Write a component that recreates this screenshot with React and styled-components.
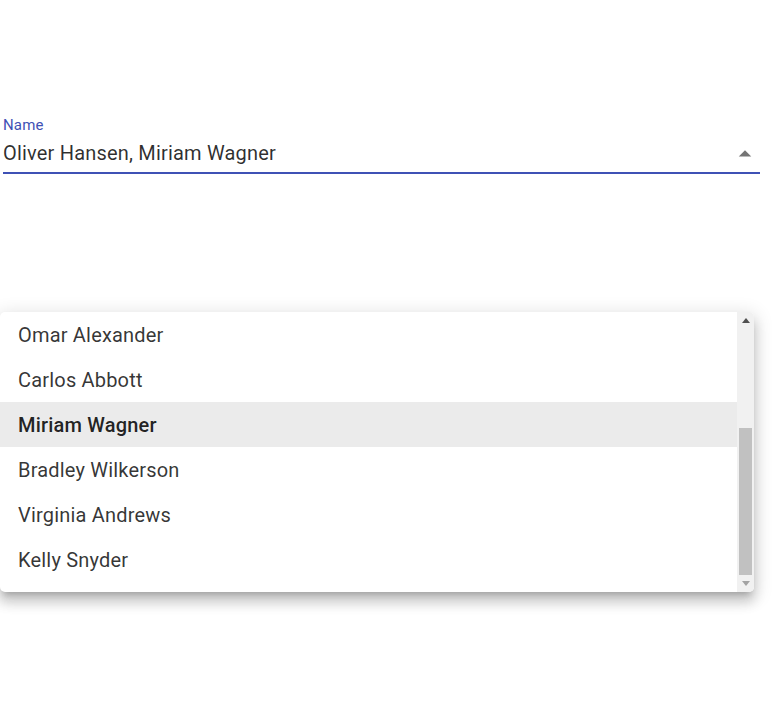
import React from 'react';
import styled, { createGlobalStyle } from 'styled-components';

const GlobalStyle = createGlobalStyle`
  html, body {
    margin: 0;
    padding: 0;
    background: #fff;
  }
  body {
    font-family: Roboto, "Noto Sans", Arial, sans-serif;
    color: rgba(0, 0, 0, 0.87);
  }
`;

const Page = styled.div`
  position: relative;
  height: 708px;
  padding: 114px 0 0 3px;
  box-sizing: border-box;
`;

const Field = styled.div`
  width: 757px;
`;

const Label = styled.label`
  display: block;
  box-sizing: border-box;
  height: 20px;
  padding-top: 4px;
  font-size: 15px;
  line-height: 1;
  letter-spacing: 0.01em;
  color: #3f51b5;
`;

const InputBase = styled.div`
  display: flex;
  align-items: flex-start;
  box-sizing: border-box;
  height: 40px;
  padding-top: 7.5px;
  border-bottom: 2px solid #3f51b5;
`;

const Value = styled.span`
  flex: 1;
  font-size: 20px;
  line-height: 23.75px;
  letter-spacing: 0.0094em;
  white-space: nowrap;
  color: rgba(0, 0, 0, 0.82);
`;

const Arrow = styled.svg`
  width: 30px;
  height: 30px;
  margin-top: -2.5px;
  fill: rgba(0, 0, 0, 0.54);
  transform: rotate(180deg);
`;

const Menu = styled.div`
  position: absolute;
  top: 312px;
  left: 0;
  width: 754px;
  height: 280px;
  display: flex;
  background: #fff;
  border-radius: 5px;
  overflow: hidden;
  box-shadow: 0 6px 6px -4px rgba(0, 0, 0, 0.2), 0 10px 12px 1px rgba(0, 0, 0, 0.14),
    0 4px 18px 3px rgba(0, 0, 0, 0.12);
`;

const Viewport = styled.div`
  flex: 1;
  overflow: hidden;
`;

const List = styled.ul`
  list-style: none;
  margin: ${(p) => -p.$offset}px 0 0;
  padding: 10px 0;
`;

const Item = styled.li`
  display: flex;
  align-items: center;
  height: 45px;
  padding: 0 18px;
  font-size: 20px;
  letter-spacing: 0.0094em;
  color: ${(p) => (p.$selected ? 'rgba(0, 0, 0, 0.87)' : 'rgba(0, 0, 0, 0.8)')};
  font-weight: ${(p) => (p.$selected ? 500 : 400)};
  background: ${(p) => (p.$selected ? 'rgba(0, 0, 0, 0.08)' : 'transparent')};
`;

const Scrollbar = styled.div`
  display: flex;
  flex-direction: column;
  width: 17px;
  background: #f1f1f1;
`;

const ScrollButton = styled.div`
  display: flex;
  align-items: center;
  justify-content: center;
  height: 17px;
  svg {
    fill: ${(p) => (p.$disabled ? '#a3a3a3' : '#505050')};
  }
`;

const Track = styled.div`
  flex: 1;
  display: flex;
  flex-direction: column;
  justify-content: flex-end;
  padding: 0 2px;
`;

const Thumb = styled.div`
  background: #c1c1c1;
`;

const names = [
  'Oliver Hansen',
  'Van Henry',
  'April Tucker',
  'Ralph Hubbard',
  'Omar Alexander',
  'Carlos Abbott',
  'Miriam Wagner',
  'Bradley Wilkerson',
  'Virginia Andrews',
  'Kelly Snyder',
];

const selected = ['Oliver Hansen', 'Miriam Wagner'];

const MENU_HEIGHT = 280;
const ITEM_HEIGHT = 45;
const LIST_PADDING = 10;
const BUTTON = 17;

export default function App() {
  const listHeight = names.length * ITEM_HEIGHT + LIST_PADDING * 2;
  const offset = listHeight - MENU_HEIGHT;
  const trackHeight = MENU_HEIGHT - BUTTON * 2;
  const thumbHeight = (trackHeight * MENU_HEIGHT) / listHeight;

  return (
    <>
      <GlobalStyle />
      <Page>
        <Field>
          <Label>Name</Label>
          <InputBase>
            <Value>{selected.join(', ')}</Value>
            <Arrow viewBox="0 0 24 24">
              <path d="M7 10l5 5 5-5z" />
            </Arrow>
          </InputBase>
        </Field>

        <Menu>
          <Viewport>
            <List $offset={offset}>
              {names.map((name) => (
                <Item key={name} $selected={selected.includes(name)}>
                  {name}
                </Item>
              ))}
            </List>
          </Viewport>
          <Scrollbar>
            <ScrollButton>
              <svg width="8" height="5" viewBox="0 0 8 5">
                <path d="M0 5L4 0L8 5z" />
              </svg>
            </ScrollButton>
            <Track>
              <Thumb style={{ height: thumbHeight }} />
            </Track>
            <ScrollButton $disabled>
              <svg width="8" height="5" viewBox="0 0 8 5">
                <path d="M0 0L8 0L4 5z" />
              </svg>
            </ScrollButton>
          </Scrollbar>
        </Menu>
      </Page>
    </>
  );
}
